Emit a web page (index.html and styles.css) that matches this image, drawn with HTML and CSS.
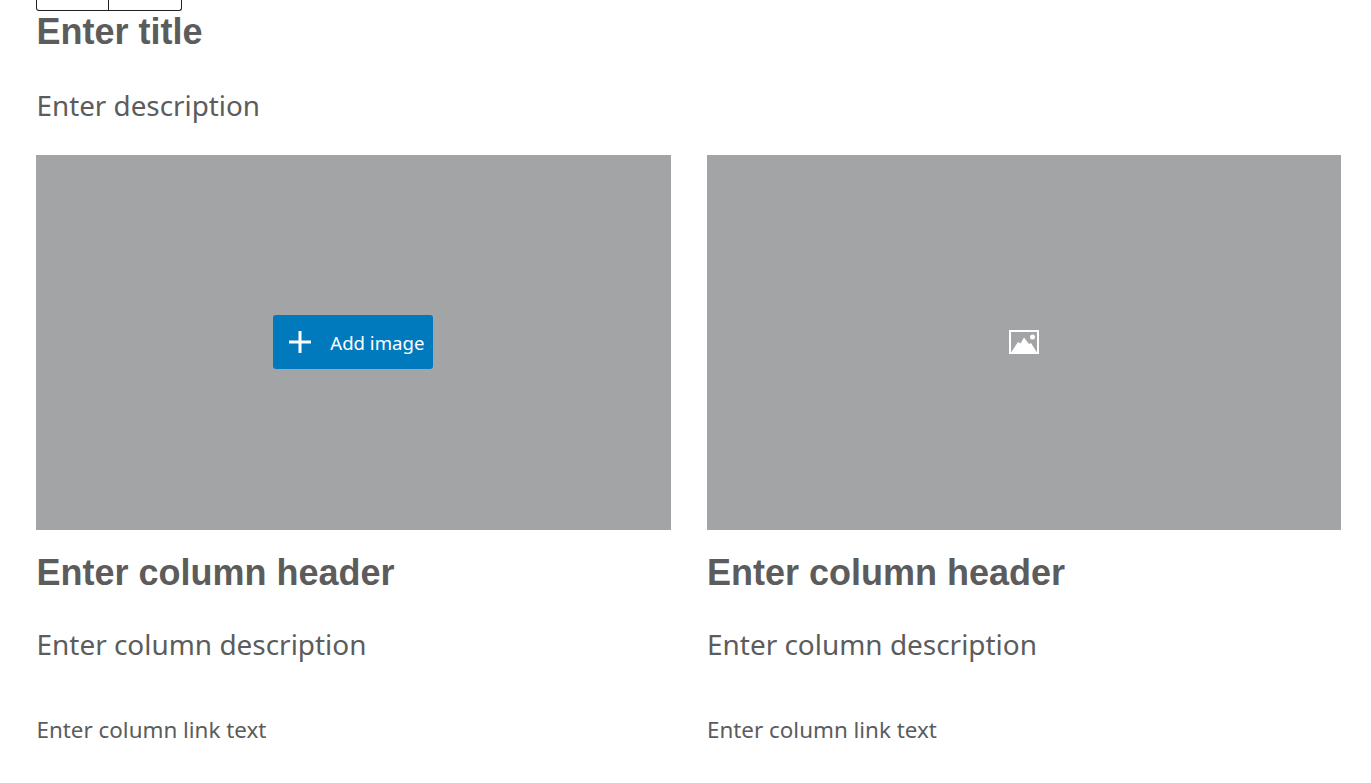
FILE: index.html
```html
<!DOCTYPE html>
<html>

<head>
    <title>Enter title</title>
    <link rel="stylesheet" href="styles.css">
</head>

<body>
    <div class="toolbar">
        <div class="tool"></div>
        <div class="tool"></div>
    </div>
    <h1 class="title">Enter title</h1>
    <p class="description">Enter description</p>

    <div class="columns">
        <div class="column">
            <div class="picture">
                <button class="add-image">
                    <svg class="plus" width="24" height="24" viewBox="0 0 24 24">
                        <path d="M12 1V23M1 12H23" stroke="#fff" stroke-width="3" fill="none" />
                    </svg>
                    <span class="add-label">Add image</span>
                </button>
            </div>
            <h2 class="column-header">Enter column header</h2>
            <p class="column-description">Enter column description</p>
            <a class="column-link">Enter column link text</a>
        </div>

        <div class="column">
            <div class="picture">
                <svg class="placeholder" width="30" height="24" viewBox="0 0 30 24">
                    <path d="M1 1H29V23H1Z" fill="none" stroke="#fff" stroke-width="2" />
                    <path d="M2 22.500L9 12L11.500 13.500L15 7.500L20 14L22 13L28 22.500Z" fill="#fff" />
                    <circle cx="23.500" cy="7" r="2.500" fill="#fff" />
                </svg>
            </div>
            <h2 class="column-header">Enter column header</h2>
            <p class="column-description">Enter column description</p>
            <a class="column-link">Enter column link text</a>
        </div>
    </div>
</body>

</html>
```

FILE: styles.css
```css
body {
    margin: 0;
    padding: 0 30px 0 36px;
    color: #5c5c5c;
    background-color: #fff;
    font-family: "Noto Sans", Arial, sans-serif;
    overflow: hidden;
}

.toolbar {
    display: flex;
    width: 144px;
    height: 10px;
    border: 1px solid #222;
    border-top: none;
    border-radius: 0 0 3px 3px;
}

.tool {
    width: 71px;
}

.tool + .tool {
    flex: 1;
    border-left: 1px solid #222;
}

.title,
.column-header {
    margin: 0;
    padding-left: 0.5px;
    font-family: "Liberation Sans", Arial, sans-serif;
    font-size: 36px;
    font-weight: bold;
    line-height: 42px;
}

.description {
    margin: 32px 0 0;
    padding-left: 0.5px;
    font-size: 27.8px;
    line-height: 40px;
}

.columns {
    display: grid;
    grid-template-columns: repeat(2, 1fr);
    gap: 36px;
    margin-top: 30px;
}

.picture {
    display: flex;
    align-items: center;
    justify-content: center;
    height: 375px;
    background-color: #a3a4a6;
}

.add-image {
    display: flex;
    align-items: center;
    gap: 18px;
    width: 160px;
    height: 54px;
    margin-bottom: 2px;
    padding: 0 8px 0 15px;
    color: #fff;
    background-color: #0079bd;
    border: none;
    border-radius: 3px;
    font-family: "Noto Sans", Arial, sans-serif;
    font-size: 18.6px;
    white-space: nowrap;
}

.add-label {
    padding-top: 2px;
}

.plus {
    flex-shrink: 0;
}

.placeholder {
    margin-bottom: 1px;
}

.column-header {
    margin-top: 22px;
}

.column-description {
    margin: 30px 0 0;
    padding-left: 0.5px;
    font-size: 27.95px;
    line-height: 40px;
}

.column-link {
    display: block;
    margin-top: 50px;
    padding-left: 0.5px;
    font-size: 22.4px;
    line-height: 32px;
}
```
